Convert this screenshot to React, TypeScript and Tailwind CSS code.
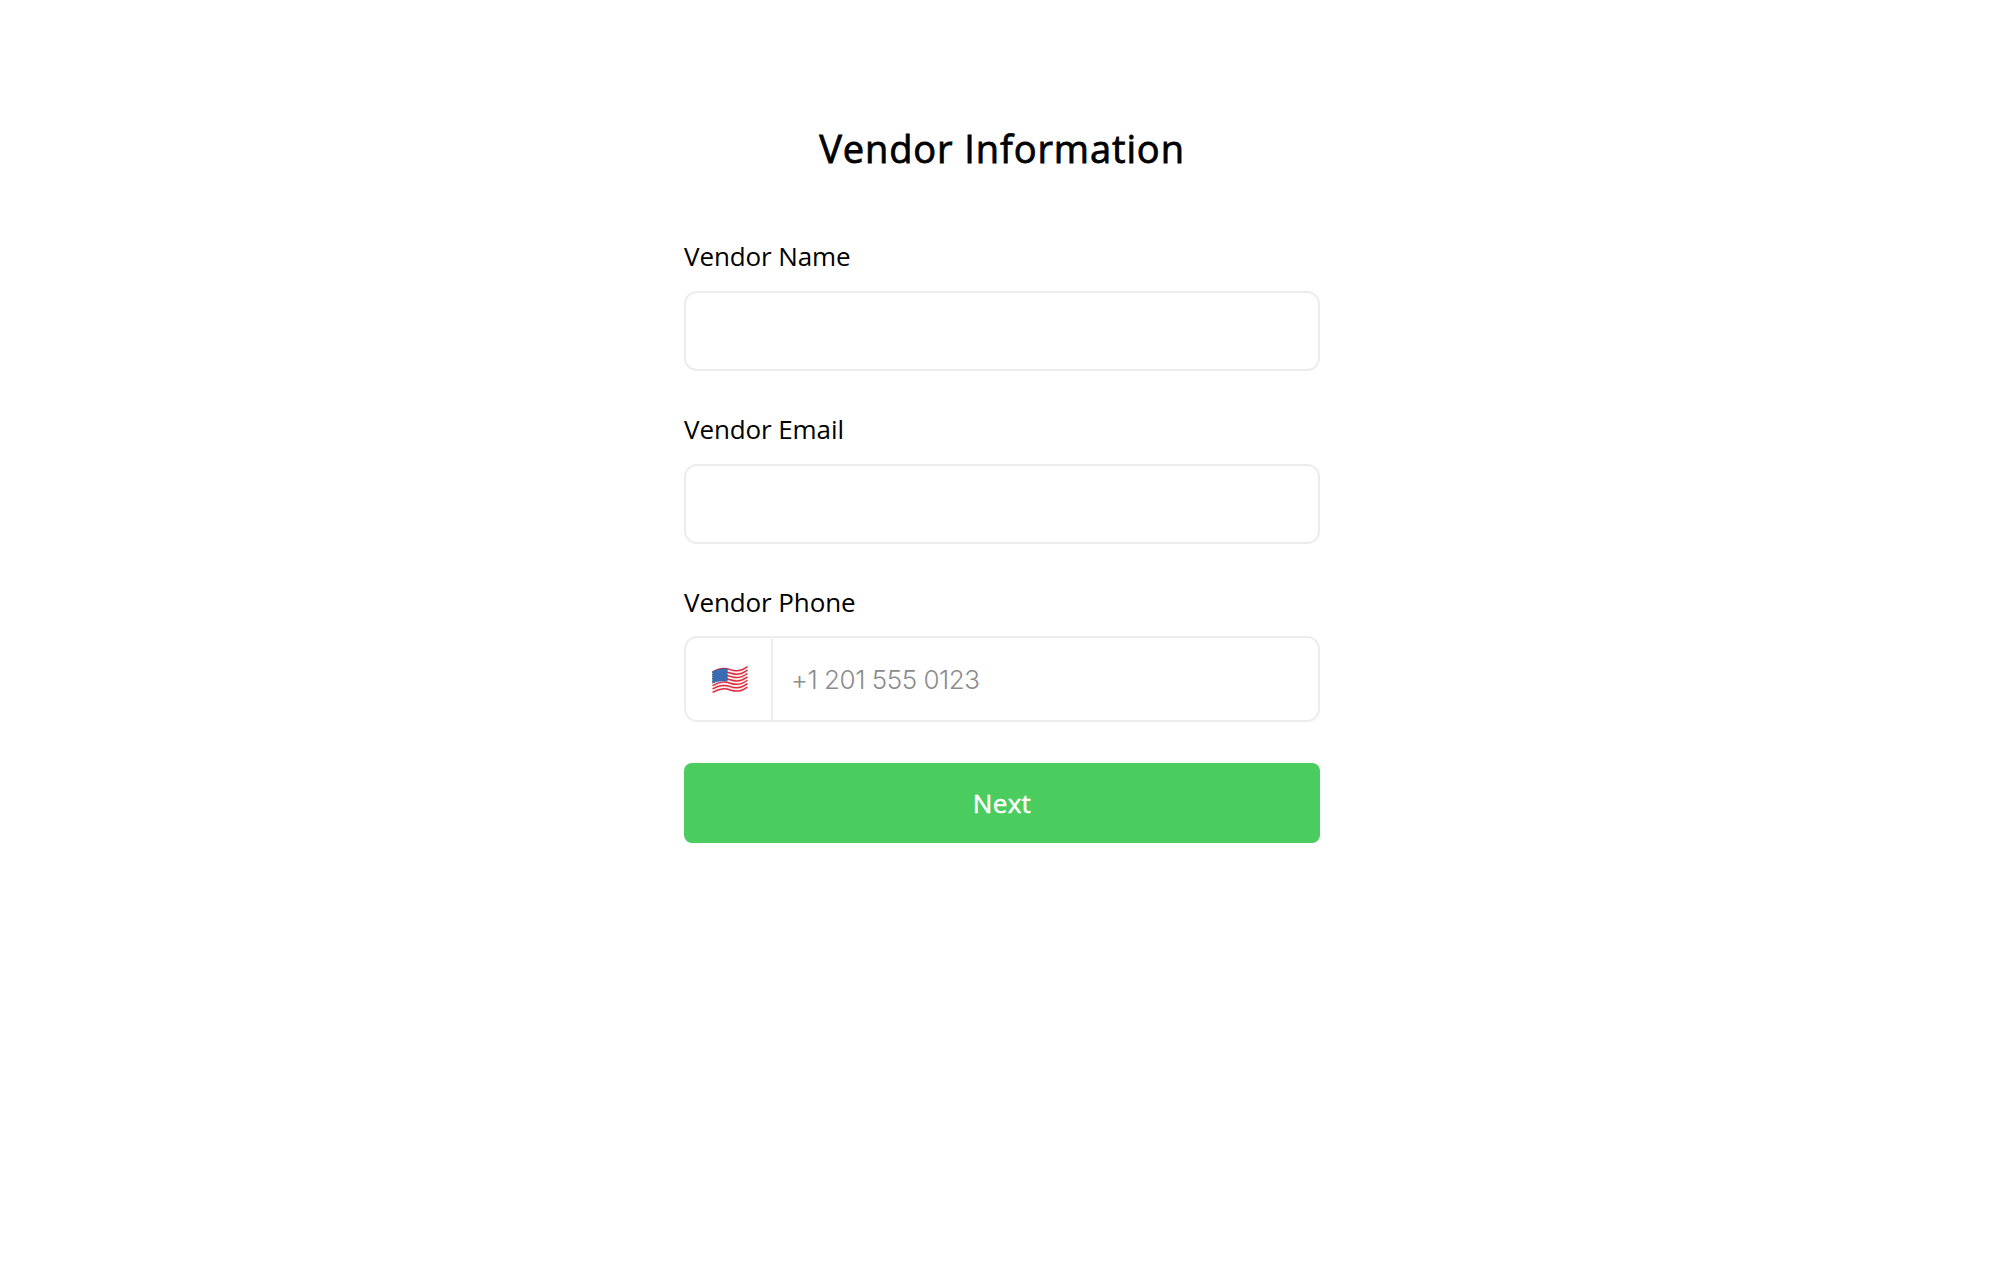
const labelClass = "block text-[26px] leading-[36px] tracking-[-0.1px] text-black";
const inputClass = "mt-[17px] h-[80px] w-full rounded-[13px] border-2 border-[#ececec] bg-white";

// wavy emoji style flag
const UsFlag = () => {
    const wave = (y: number) => `M0.5 ${y + 3} C 8 ${y - 1}, 12 ${y - 1}, 18 ${y + 1} S 28 ${y + 2}, 33.5 ${y - 2}`;
    return (
        <svg width="36" height="28" viewBox="0 0 34 26" fill="none">
            <path d="M0.5 6 C8 2 12 2 18 4 S28 5 33.5 1 V21 C28 25 24 24 18 23 S8 22 0.5 25 Z" fill="#fbeeee" />
            {[0, 1, 2, 3, 4, 5, 6].map((i) => (
                <path key={i} d={wave(3.4 + i * 3.2)} stroke="#dd2a3c" strokeWidth="1.4" />
            ))}
            <path d="M0.5 6 C5 3.8 9 3 14.5 3.2 V15 C9 14.4 5 15 0.5 17 Z" fill="#3a6cb4" />
            <path d="M0.5 6 C5 3.8 9 3 14.5 3.2 V15 C9 14.4 5 15 0.5 17 Z" stroke="#27508f" strokeWidth="0.6" strokeDasharray="1 1" />
        </svg>
    );
};

export default function App() {
    return (
        <div className="min-h-[1285px] bg-white font-['Open_Sans',sans-serif]">
            <div className="ml-[684px] w-[636px] pt-[124px]">
                <h1 className="text-center text-[38px] leading-[48px] font-normal tracking-[0.9px] text-black [-webkit-text-stroke:0.8px_black]">
                    Vendor Information
                </h1>

                <label className={`${labelClass} mt-[66px]`}>Vendor Name</label>
                <div className={inputClass} />

                <label className={`${labelClass} mt-[40px]`}>Vendor Email</label>
                <div className={inputClass} />

                <label className={`${labelClass} mt-[40px]`}>Vendor Phone</label>
                <div className="mt-[16px] flex h-[86px] w-full items-center rounded-[13px] border-2 border-[#ececec] bg-white">
                    <div className="flex h-[81px] w-[87px] items-center justify-center border-r-2 border-[#ececec] pl-[3px]">
                        <UsFlag />
                    </div>
                    <span className="pl-[18px] font-['Inter',sans-serif] text-[26px] font-light tracking-[-0.47px] text-[#8c8c8c]">
                        +1 201 555 0123
                    </span>
                </div>

                <button className="mt-[41px] h-[80px] w-full rounded-[8px] bg-[#4acc5f] text-[26px] font-normal tracking-[0.3px] text-white [-webkit-text-stroke:0.5px_white]">
                    Next
                </button>
            </div>
        </div>
    );
}
